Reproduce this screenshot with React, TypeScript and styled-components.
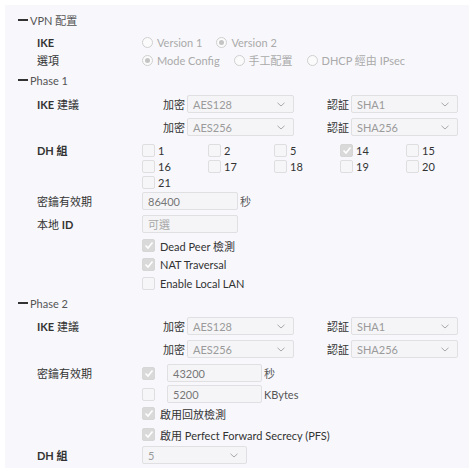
import React, { FC } from 'react';
import styled, { createGlobalStyle, css } from 'styled-components';

const GlobalStyle = createGlobalStyle`
  html, body {
    margin: 0;
    background: #fff;
  }
  body {
    font-family: Lato, "Noto Sans CJK TC", "Noto Sans", sans-serif;
    font-size: 11px;
    color: #333;
  }
`;

const Panel = styled.div`
  margin: 5px;
  height: 463px;
  box-sizing: border-box;
  padding: 6px 0 0 13px;
  background: #f8f8fc;
`;

const SectionHeader = styled.div<{ top?: number }>`
  display: flex;
  align-items: center;
  height: 18px;
  margin-top: ${p => p.top || 0}px;
  color: #555;
`;

const Dash = styled.span`
  display: inline-block;
  width: 10px;
  height: 2.5px;
  background: #333;
  margin-right: 2px;
`;

const Row = styled.div<{ top?: number }>`
  display: grid;
  grid-template-columns: 105px auto;
  margin-left: 19px;
  margin-top: ${p => p.top || 0}px;
`;

const Label = styled.div<{ h?: number }>`
  display: flex;
  align-items: center;
  height: ${p => p.h || 18}px;
  color: #333;
  b {
    font-weight: 700;
  }
`;

const Stack = styled.div<{ gap?: number }>`
  display: flex;
  flex-direction: column;
  gap: ${p => p.gap || 0}px;
`;

const Line = styled.div<{ h?: number; gap?: number }>`
  display: flex;
  align-items: center;
  height: ${p => p.h || 18}px;
  gap: ${p => p.gap || 0}px;
`;

const RadioItem = styled.label`
  display: flex;
  align-items: center;
  gap: 4px;
  color: #aaa;
  margin-right: 14px;
`;

const RadioDot = styled.span<{ checked?: boolean }>`
  width: 9px;
  height: 9px;
  border-radius: 50%;
  border: 1px solid #cfcfcf;
  background: #fbfbfb;
  position: relative;
  ${p => p.checked && css`
    &::after {
      content: '';
      position: absolute;
      left: 2px;
      top: 2px;
      width: 5px;
      height: 5px;
      border-radius: 50%;
      background: #c4c4c4;
    }
  `}
`;

const Pair = styled.div`
  display: flex;
  align-items: center;
  width: 152px;
`;

const PairLabel = styled.span`
  width: 43px;
  text-align: right;
  margin-right: 2px;
  color: #333;
`;

const SelectBox = styled.div<{ w: number }>`
  width: ${p => p.w}px;
  height: 18px;
  box-sizing: border-box;
  border: 1px solid #e0e0e3;
  background: #f5f5f7;
  border-radius: 2px;
  display: flex;
  align-items: center;
  justify-content: space-between;
  padding: 0 8px 0 5px;
  color: #9a9a9a;
`;

const InputBox = styled.div<{ w: number; placeholder?: boolean }>`
  width: ${p => p.w}px;
  height: 18px;
  box-sizing: border-box;
  border: 1px solid #e0e0e3;
  background: #f5f5f7;
  border-radius: 2px;
  display: flex;
  align-items: center;
  padding: 0 5px;
  color: ${p => (p.placeholder ? '#a8a8a8' : '#777')};
`;

const Unit = styled.span`
  margin-left: 2px;
  color: #555;
`;

const Box = styled.span<{ checked?: boolean }>`
  flex: none;
  width: 13px;
  height: 13px;
  box-sizing: border-box;
  border-radius: 2px;
  border: 1px solid ${p => (p.checked ? '#d6d6d6' : '#dedee0')};
  background: ${p => (p.checked ? '#d9d9d9' : '#f6f6f8')};
  display: flex;
  align-items: center;
  justify-content: center;
`;

const CheckItem = styled.label<{ gap: number }>`
  display: flex;
  align-items: center;
  gap: ${p => p.gap}px;
  color: #333;
`;

const DhGrid = styled.div`
  display: grid;
  grid-template-columns: repeat(5, 66px);
  grid-auto-rows: 16px;
  align-items: center;
`;

const Chevron = () => (
  <svg width="8" height="5" viewBox="0 0 8 5">
    <polyline points="0.5,0.8 4,4 7.5,0.8" fill="none" stroke="#a8a8a8" strokeWidth="1" />
  </svg>
);

const Tick = () => (
  <svg width="10" height="9" viewBox="0 0 10 9">
    <polyline points="1.5,4.5 4,7 8.5,1.5" fill="none" stroke="#fff" strokeWidth="1.6" />
  </svg>
);

const Check: FC<{ checked?: boolean; gap?: number; children?: React.ReactNode }> = ({ checked, gap = 5, children }) => (
  <CheckItem gap={gap}>
    <Box checked={checked}>{checked && <Tick />}</Box>
    {children}
  </CheckItem>
);

const Radio: FC<{ checked?: boolean; children: React.ReactNode }> = ({ checked, children }) => (
  <RadioItem>
    <RadioDot checked={checked} />
    {children}
  </RadioItem>
);

const Select: FC<{ value: string; w?: number }> = ({ value, w = 107 }) => (
  <SelectBox w={w}>
    <span>{value}</span>
    <Chevron />
  </SelectBox>
);

const Proposal: FC<{ top: number; pairs: [string, string][] }> = ({ top, pairs }) => (
  <Row top={top}>
    <Label><span><b>IKE</b> 建議</span></Label>
    <Stack gap={5}>
      {pairs.map(([enc, auth]) => (
        <Line key={enc + auth} gap={12}>
          <Pair>
            <PairLabel>加密</PairLabel>
            <Select value={enc} />
          </Pair>
          <Pair>
            <PairLabel>認証</PairLabel>
            <Select value={auth} />
          </Pair>
        </Line>
      ))}
    </Stack>
  </Row>
);

const dhGroups = [
  { n: 1 }, { n: 2 }, { n: 5 }, { n: 14, checked: true }, { n: 15 },
  { n: 16 }, { n: 17 }, { n: 18 }, { n: 19 }, { n: 20 },
  { n: 21 },
];

export default function App() {
  return (
    <>
      <GlobalStyle />
      <Panel>
        <SectionHeader><Dash />VPN 配置</SectionHeader>
        <Row top={4}>
          <Label><b>IKE</b></Label>
          <Line>
            <Radio>Version 1</Radio>
            <Radio checked>Version 2</Radio>
          </Line>
        </Row>
        <Row>
          <Label>選項</Label>
          <Line>
            <Radio checked>Mode Config</Radio>
            <Radio>手工配置</Radio>
            <Radio>DHCP 經由 IPsec</Radio>
          </Line>
        </Row>

        <SectionHeader top={2}><Dash />Phase 1</SectionHeader>
        <Proposal top={6} pairs={[['AES128', 'SHA1'], ['AES256', 'SHA256']]} />
        <Row top={6}>
          <Label h={16}><b>DH 組</b></Label>
          <DhGrid>
            {dhGroups.map(g => (
              <Check key={g.n} checked={g.checked} gap={3}>{g.n}</Check>
            ))}
          </DhGrid>
        </Row>
        <Row top={2}>
          <Label>密鑰有效期</Label>
          <Line>
            <InputBox w={96}>86400</InputBox>
            <Unit>秒</Unit>
          </Line>
        </Row>
        <Row top={5}>
          <Label><span>本地 <b>ID</b></span></Label>
          <Line>
            <InputBox w={96} placeholder>可選</InputBox>
          </Line>
        </Row>
        <Row top={3}>
          <div />
          <Stack>
            <Line h={19}><Check checked>Dead Peer 檢測</Check></Line>
            <Line h={19}><Check checked>NAT Traversal</Check></Line>
            <Line h={19}><Check>Enable Local LAN</Check></Line>
          </Stack>
        </Row>

        <SectionHeader top={1}><Dash />Phase 2</SectionHeader>
        <Proposal top={5} pairs={[['AES128', 'SHA1'], ['AES256', 'SHA256']]} />
        <Row top={6}>
          <Label>密鑰有效期</Label>
          <Stack gap={3}>
            <Line gap={12}>
              <Box checked><Tick /></Box>
              <Line>
                <InputBox w={95}>43200</InputBox>
                <Unit>秒</Unit>
              </Line>
            </Line>
            <Line gap={12}>
              <Box />
              <Line>
                <InputBox w={95}>5200</InputBox>
                <Unit>KBytes</Unit>
              </Line>
            </Line>
          </Stack>
        </Row>
        <Row top={1}>
          <div />
          <Stack gap={2}>
            <Line h={19}><Check checked>啟用回放檢測</Check></Line>
            <Line h={19}><Check checked>啟用 Perfect Forward Secrecy (PFS)</Check></Line>
          </Stack>
        </Row>
        <Row top={2}>
          <Label><b>DH 組</b></Label>
          <Line>
            <Select value="5" w={105} />
          </Line>
        </Row>
      </Panel>
    </>
  );
}
